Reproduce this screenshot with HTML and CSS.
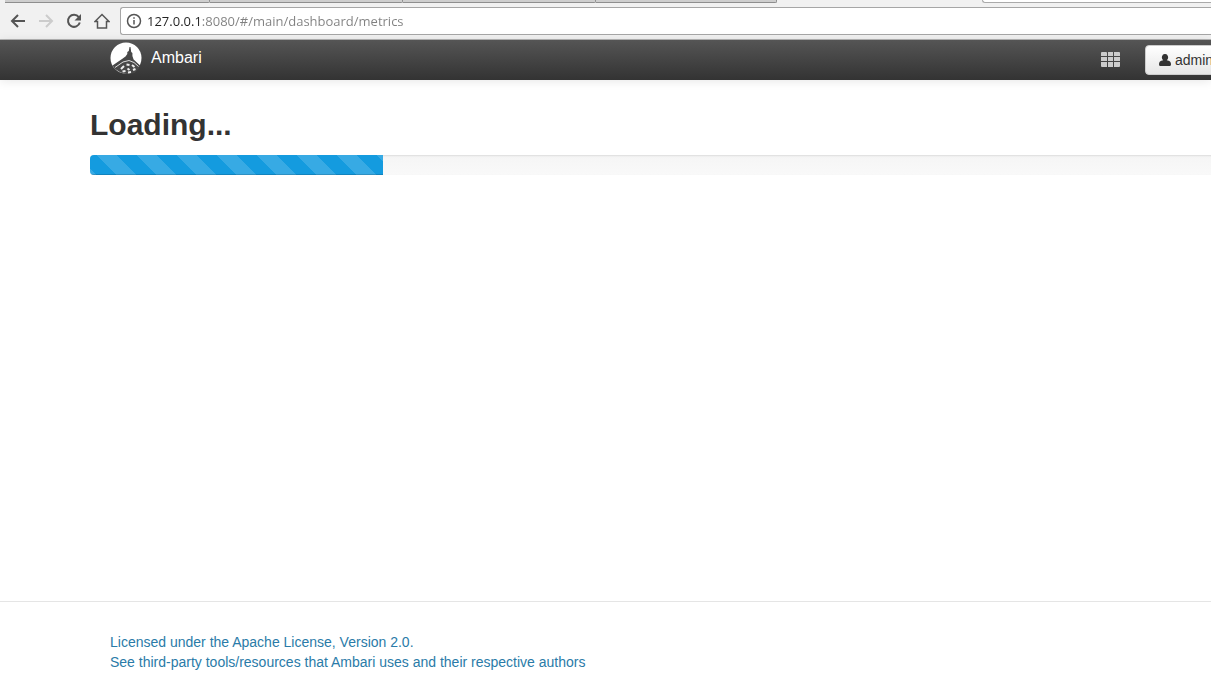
FILE: index.html
```html
<!DOCTYPE html>
<html lang="en">
<head>
    <meta charset="UTF-8">
    <meta name="viewport" content="width=device-width, initial-scale=1.0">
    <title>Ambari</title>
    <link rel="stylesheet" href="styles.css">
</head>
<body>

<div class="browser">
    <div class="tabs">
        <div class="tab"></div>
        <div class="tab"></div>
        <div class="tab"></div>
        <div class="tab"></div>
        <div class="tab-active"></div>
        <div class="tab-rest"></div>
    </div>
    <div class="toolbar">
        <button type="button" class="tool" aria-label="Back">
            <svg viewBox="0 0 16 16"><path d="M15 8H2M8 2L2 8l6 6"/></svg>
        </button>
        <button type="button" class="tool" aria-label="Forward" disabled>
            <svg viewBox="0 0 16 16"><path d="M1 8h13M8 2l6 6-6 6"/></svg>
        </button>
        <button type="button" class="tool" aria-label="Reload">
            <svg viewBox="0 0 16 16"><path d="M12.800 4.200A6 6 0 1 0 13.800 9.500"/><path class="solid" d="M15 1v6.500H8.500z"/></svg>
        </button>
        <button type="button" class="tool" aria-label="Home">
            <svg class="thin" viewBox="0 0 16 16"><path d="M3.500 8.500H1L8 1.500l7 7h-2.500V15h-9z"/></svg>
        </button>
        <div class="address">
            <svg viewBox="0 0 16 16"><circle cx="8" cy="8" r="6.500"/><path d="M8 7v4.500M8 4.200v1.600"/></svg>
            <input type="text" class="url" aria-label="Address" value="127.0.0.1:8080/#/main/dashboard/metrics">
        </div>
    </div>
</div>

<header class="navbar">
    <a href="#" class="brand">
        <svg class="logo" viewBox="0 0 32 32">
            <circle cx="16" cy="16" r="15.500" fill="#fff"/>
            <path fill="#484848" d="M19.500 5h1l.7 5 1.200 1v3l1.200 3.500 6.500 6-1.500 3.500-4 4-8 1-6-1.500L5 27l-2.500-3.500L12 17l3.500-2.500 1.800-2.500v-2l1.500-1z"/>
            <path fill="none" stroke="#ddd" stroke-width="1" d="M5 25.500l8-5.500 6-1.500 5 2 4.500 4"/>
            <g fill="none" stroke="#eee" stroke-width="2">
                <path d="M11 27l3-3M16.500 22.500l3 .5M22 23l2.500 2M12.500 29.500l3-.5M17.500 26.500l2 1.500M23 28l2.500-1M18 30.500l3-.5"/>
            </g>
        </svg>
        <span>Ambari</span>
    </a>
    <div class="nav-right">
        <button type="button" class="views" aria-label="Views">
            <svg viewBox="0 0 19 15"><path d="M1 0h4a1 1 0 0 1 1 1v3H0V1a1 1 0 0 1 1-1zM7 0h5v4H7zM13 0h5a1 1 0 0 1 1 1v3h-6zM0 5h6v4H0zM7 5h5v4H7zM13 5h6v4h-6zM0 10h6v5H1a1 1 0 0 1-1-1zM7 10h5v5H7zM13 10h6v4a1 1 0 0 1-1 1h-5z"/></svg>
        </button>
        <button type="button" class="user">
            <svg viewBox="0 0 12 12"><path d="M6 0a3 3.400 0 0 1 1.800 6.200C10.800 6.400 12 8 12 10.200 12 11.500 11.300 12 10.300 12H1.700C.7 12 0 11.500 0 10.200 0 8 1.200 6.400 4.200 6.200A3 3.400 0 0 1 6 0z"/></svg>
            admin
        </button>
    </div>
</header>

<main class="content">
    <h1 id="loading">Loading...</h1>
    <div class="progress" role="progressbar" aria-labelledby="loading">
        <div class="bar"></div>
    </div>
</main>

<footer class="footer">
    <a href="#">Licensed under the Apache License, Version 2.0.</a>
    <a href="#">See third-party tools/resources that Ambari uses and their respective authors</a>
</footer>

</body>
</html>
```
FILE: styles.css
```css
* {
    box-sizing: border-box;
}

body {
    margin: 0;
    height: 100vh;
    display: flex;
    flex-direction: column;
    overflow: hidden;
    background-color: #fff;
    color: #333;
    font-family: "Liberation Sans", Arial, sans-serif;
    font-size: 14px;
    line-height: 20px;
}

button {
    font: inherit;
    cursor: pointer;
}

/* Browser window */
.browser {
    background-color: #f1f1f1;
    border-bottom: 1px solid #b4b4b4;
}

.tabs {
    display: flex;
    height: 3px;
    padding-left: 5px;
}

.tab {
    flex: 0 0 16%;
    background-color: #cecece;
    border-right: 1px solid #8e8e8e;
    border-bottom: 1px solid #8e8e8e;
    border-bottom-right-radius: 2px;
}

.tab:first-child {
    flex-basis: 17%;
}

.tab:nth-child(4) {
    flex-basis: 15%;
}

.tab-active {
    flex: 0 0 17%;
}

.tab-rest {
    flex: 1;
    background-color: #fff;
    border-left: 1px solid #aaa;
    border-bottom: 1px solid #aaa;
    border-bottom-left-radius: 3px;
}

.toolbar {
    display: flex;
    align-items: center;
    gap: 12px;
    padding: 4px 0 4px 10px;
}

.tool {
    width: 16px;
    height: 16px;
    padding: 0;
    border: none;
    background: none;
    color: #555;
}

.tool:disabled {
    color: #ccc;
}

.tool svg,
.address svg {
    display: block;
    width: 16px;
    height: 16px;
    fill: none;
    stroke: currentColor;
    stroke-width: 2;
}

.tool .solid {
    fill: currentColor;
    stroke: none;
}

.tool .thin,
.address svg {
    stroke-width: 1.5;
}

.address {
    flex: 1;
    display: flex;
    align-items: center;
    gap: 5px;
    height: 28px;
    margin-left: -2px;
    padding-left: 5px;
    background-color: #fff;
    border: 1px solid #a6a6a6;
    border-right: none;
    border-radius: 3px 0 0 3px;
    color: #555;
}

/* host part dark, the rest of the url grey */
.url {
    flex: 1;
    padding: 0;
    border: none;
    outline: none;
    font-family: "Open Sans", "Noto Sans", sans-serif;
    font-size: 13px;
    line-height: 20px;
    color: transparent;
    background: linear-gradient(to right, #222 55px, #808080 55px);
    -webkit-background-clip: text;
    background-clip: text;
}

/* Ambari navbar */
.navbar {
    display: flex;
    justify-content: space-between;
    height: 40px;
    padding-left: 110px;
    background-image: linear-gradient(to bottom, #555, #333);
    box-shadow: 0 1px 10px rgba(0, 0, 0, 0.1);
}

.brand {
    display: flex;
    gap: 9px;
    color: #fff;
    font-size: 16px;
    line-height: 36px;
    text-decoration: none;
}

.logo {
    width: 32px;
    height: 32px;
    margin-top: 2px;
}

.nav-right {
    display: flex;
    align-items: center;
    gap: 25px;
    margin-right: -36px; /* the user menu runs past the window edge */
    padding-bottom: 1px;
}

.views {
    padding: 0;
    border: none;
    background: none;
}

.views svg {
    display: block;
    width: 19px;
    height: 15px;
    fill: #ccc;
}

.user {
    display: flex;
    align-items: center;
    gap: 4px;
    width: 102px;
    height: 30px;
    padding: 0 13px;
    border: 1px solid #ccc;
    border-radius: 4px;
    background-image: linear-gradient(to bottom, #fff, #e6e6e6);
    color: #333;
}

.user svg {
    width: 12px;
    height: 12px;
    fill: #333;
}

/* Loading */
.content {
    flex: 1;
    padding: 25px 0 0 90px;
}

h1 {
    margin: 0 0 10px;
    font-size: 30px;
    line-height: 40px;
}

.progress {
    height: 20px;
    margin-right: -4px;
    overflow: hidden;
    border-radius: 4px;
    background-image: linear-gradient(to bottom, #f5f5f5, #f9f9f9);
    box-shadow: inset 0 1px 2px rgba(0, 0, 0, 0.1);
}

.bar {
    width: 26%;
    height: 20px;
    background-color: #149bdf;
    background-image: linear-gradient(45deg, rgba(255, 255, 255, 0.15) 25%, transparent 25%, transparent 50%, rgba(255, 255, 255, 0.15) 50%, rgba(255, 255, 255, 0.15) 75%, transparent 75%, transparent);
    background-size: 40px 40px;
    background-position: 7px 0;
    box-shadow: inset 0 -1px 0 rgba(0, 0, 0, 0.15);
}

/* Footer */
.footer {
    display: flex;
    flex-direction: column;
    align-items: flex-start;
    padding: 30px 0 9px 110px;
    border-top: 1px solid #e5e5e5;
}

.footer a {
    color: #2a7ba8;
    text-decoration: none;
}

.footer a:hover {
    text-decoration: underline;
}
```
